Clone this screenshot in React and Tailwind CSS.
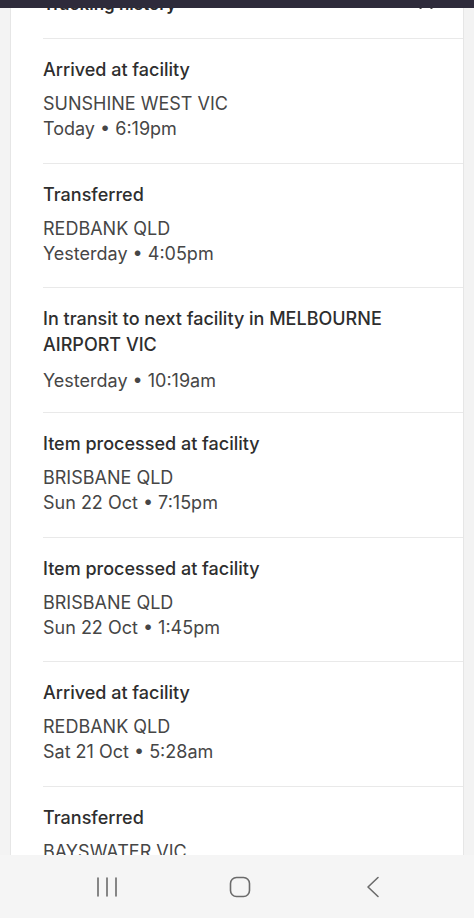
const events = [
  { title: 'Arrived at facility', place: 'SUNSHINE WEST VIC', when: 'Today • 6:19pm' },
  { title: 'Transferred', place: 'REDBANK QLD', when: 'Yesterday • 4:05pm' },
  { title: 'In transit to next facility in MELBOURNE AIRPORT VIC', when: 'Yesterday • 10:19am' },
  { title: 'Item processed at facility', place: 'BRISBANE QLD', when: 'Sun 22 Oct • 7:15pm' },
  { title: 'Item processed at facility', place: 'BRISBANE QLD', when: 'Sun 22 Oct • 1:45pm' },
  { title: 'Arrived at facility', place: 'REDBANK QLD', when: 'Sat 21 Oct • 5:28am' },
  { title: 'Transferred', place: 'BAYSWATER VIC', when: 'Fri 20 Oct • 9:02pm' },
]

export default function App() {
  return (
    <div
      className="w-[474px] h-[918px] flex flex-col bg-[#f3f3f3] overflow-hidden"
      style={{ fontFamily: 'Inter, "Noto Sans", sans-serif' }}
    >
      {/* status bar sliver */}
      <div className="h-[8px] shrink-0 bg-[#2e2b3b] relative z-10" />

      <div className="flex-1 overflow-hidden px-[10px]">
        <div className="bg-white border-x border-[#e6e6e6] -mt-[18px]">
          {/* header, mostly scrolled away */}
          <div className="ml-[32px] flex items-start justify-between pr-[30px] pb-[20px] border-b border-[#e9e9e9]">
            <h2 className="text-[17px] leading-[28px] font-semibold text-[#2b2b2b]">Tracking history</h2>
            <svg className="mt-[11px]" width="14" height="8" viewBox="0 0 14 8" fill="none" stroke="#444" strokeWidth={2.2} strokeLinecap="round" strokeLinejoin="round">
              <path d="M1.5 7L7 1.5 12.5 7" />
            </svg>
          </div>

          {events.map((e, i) => (
            <div
              key={i}
              className={`ml-[32px] pr-[40px] pt-[18px] border-b border-[#e9e9e9] ${e.place ? 'pb-[21.5px]' : 'pb-[19px]'}`}
            >
              <p className="text-[18px] leading-[26px] font-medium text-[#2e2e2e]">{e.title}</p>
              <div className={e.place ? 'mt-[8px]' : 'mt-[10px]'}>
                {e.place && <p className="text-[18px] leading-[25px] text-[#464646]">{e.place}</p>}
                <p className="text-[18px] leading-[25px] text-[#464646]">{e.when}</p>
              </div>
            </div>
          ))}
        </div>
      </div>

      {/* android nav bar */}
      <div className="h-[63px] shrink-0 bg-[#f5f5f5] flex items-center pl-[96px]">
        <svg width="22" height="22" viewBox="0 0 22 22" fill="none" stroke="#6b6b6b" strokeWidth="1.6" strokeLinecap="round">
          <path d="M2 2v18M11 2v18M20 2v18" />
        </svg>
        <svg className="ml-[111px]" width="22" height="22" viewBox="0 0 22 22" fill="none" stroke="#6b6b6b" strokeWidth="1.6">
          <rect x="1.5" y="1.5" width="19" height="19" rx="6" />
        </svg>
        <svg className="ml-[115px]" width="14" height="22" viewBox="0 0 14 22" fill="none" stroke="#6b6b6b" strokeWidth="1.6" strokeLinecap="round" strokeLinejoin="round">
          <path d="M12 1.5L2 11l10 9.5" />
        </svg>
      </div>
    </div>
  )
}
